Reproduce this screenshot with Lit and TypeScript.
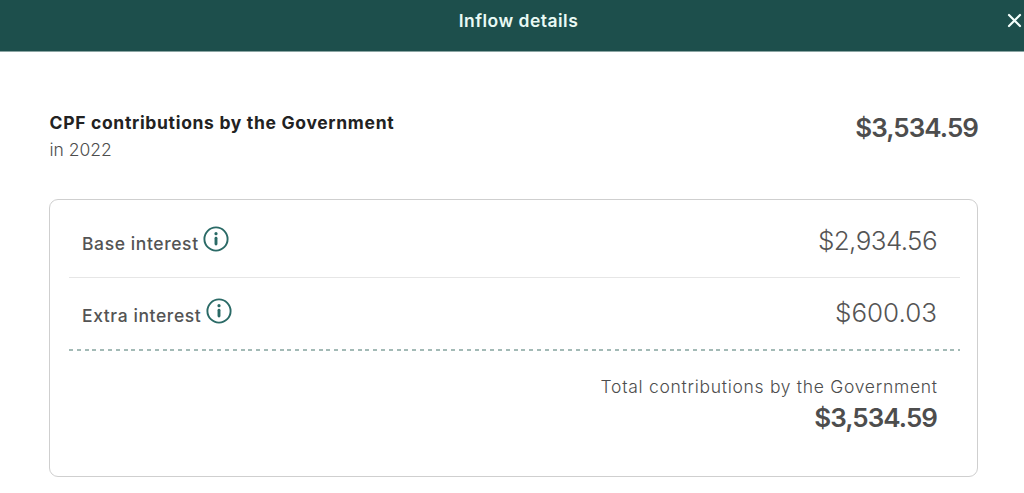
import { css, html, LitElement } from 'lit';
import { customElement, property } from 'lit/decorators.js';

type Inflow = {
    label: string,
    amount: string,
    kind: string
}

@customElement('info-icon')
export class InfoIcon extends LitElement {
    static styles = css`
        :host {
            display: block;
            width: 26px;
            height: 26px;
        }

        svg {
            display: block;
        }
    `;

    protected render() {
        return html`
            <svg width="26" height="26" viewBox="0 0 26 26" fill="none">
                <circle cx="13" cy="13" r="11.6" stroke="#2a6a66" stroke-width="1.9" />
                <circle cx="13" cy="7.7" r="1.6" fill="#2a6a66" />
                <path d="M13 12.3V18" stroke="#2a6a66" stroke-width="2.9" stroke-linecap="round" />
            </svg>
        `;
    }
}

@customElement('inflow-row')
export class InflowRow extends LitElement {
    static styles = css`
        :host {
            display: flex;
            justify-content: space-between;
            padding: 0 23px 0 13px;
            color: #545454;
        }

        .name {
            display: flex;
            gap: 4.5px;
        }

        .label {
            font-size: 17.5px;
            font-weight: 500;
            line-height: 24px;
            letter-spacing: 0.6px;
            padding-top: 32px;
        }

        .icon {
            padding-top: 26px;
        }

        .amount {
            font-size: 26px;
            font-weight: 300;
            line-height: 32px;
            padding-top: 25px;
        }

        .amount.base {
            letter-spacing: -0.6px;
        }
    `;

    @property({ type: String })
    public label: string = '';

    @property({ type: String })
    public amount: string = '';

    @property({ type: String })
    public kind: string = 'base';

    protected render() {
        return html`
            <div class="name">
                <span class="label">${this.label}</span>
                <info-icon class="icon"></info-icon>
            </div>
            <span class="amount ${this.kind}">${this.amount}</span>
        `;
    }
}

@customElement('app-root')
export class AppRoot extends LitElement {
    private _inflows: Inflow[] = [
        { label: 'Base interest', amount: '$2,934.56', kind: 'base' },
        { label: 'Extra interest', amount: '$600.03', kind: 'extra' }
    ];

    static styles = css`
        :host {
            display: block;
            height: 493px;
            overflow: hidden;
            background-color: #fff;
            color: #4d4d4d;
            font-family: Inter, "Liberation Sans", sans-serif;
        }

        header {
            display: grid;
            grid-template-columns: 1fr auto 1fr;
            height: 51px;
            border-bottom: 1px solid #8ba5a3;
            background-color: #1d4f4c;
        }

        .title {
            grid-column: 2;
            margin: 0;
            padding: 9px 0 0 13px;
            color: #e9faf5;
            font-size: 17.5px;
            font-weight: 600;
            line-height: 24px;
            letter-spacing: 0.48px;
        }

        .close {
            justify-self: end;
            padding: 13px 2.5px 0 0;
        }

        .close svg {
            display: block;
        }

        .summary {
            display: flex;
            justify-content: space-between;
            height: 147px;
            padding: 0 46px 0 49.5px;
            box-sizing: border-box;
        }

        .heading {
            margin: 0;
            padding-top: 59px;
            color: #222;
            font-size: 17.5px;
            font-weight: 700;
            line-height: 24px;
            letter-spacing: 0.68px;
        }

        .period {
            margin: 0;
            padding-top: 3px;
            font-size: 17.5px;
            font-weight: 300;
            line-height: 24px;
        }

        .sum {
            padding-top: 60px;
            font-size: 26px;
            font-weight: 600;
            line-height: 32px;
            letter-spacing: -0.95px;
        }

        .card {
            height: 278px;
            margin: 0 46px 0 49px;
            padding: 0 17px 0 19px;
            border: 1px solid #cfcfcf;
            border-radius: 9px;
            box-sizing: border-box;
        }

        inflow-row {
            height: 72px;
            box-sizing: border-box;
        }

        inflow-row.base {
            height: 78px;
            border-bottom: 1px solid #e6e6e6;
        }

        inflow-row.base + inflow-row {
            margin-top: -6px;
            height: 77px;
        }

        .dashes {
            height: 2px;
            background: repeating-linear-gradient(to right, #a3bab6 0 4px, #fff 4px 7.8px);
        }

        .total {
            padding-right: 23px;
            text-align: right;
        }

        .total-label {
            padding-top: 24px;
            margin-right: -0.7px;
            font-size: 17.5px;
            font-weight: 300;
            line-height: 24px;
            letter-spacing: 0.71px;
        }

        .total-amount {
            padding-top: 3px;
            font-size: 26px;
            font-weight: 600;
            line-height: 32px;
            letter-spacing: -0.95px;
        }
    `;

    protected render() {
        return html`
            <header>
                <h1 class="title">Inflow details</h1>
                <div class="close">
                    <svg width="15" height="15" viewBox="0 0 15 15">
                        <path d="M2 2L13 13M13 2L2 13" stroke="#f4fffc" stroke-width="2.2" stroke-linecap="round" />
                    </svg>
                </div>
            </header>
            <section class="summary">
                <div>
                    <h2 class="heading">CPF contributions by the Government</h2>
                    <p class="period">in 2022</p>
                </div>
                <div class="sum">$3,534.59</div>
            </section>
            <section class="card">
                ${this._inflows.map(item => html`
                    <inflow-row class=${item.kind} .label=${item.label} .amount=${item.amount} .kind=${item.kind}></inflow-row>
                `)}
                <div class="dashes"></div>
                <div class="total">
                    <div class="total-label">Total contributions by the Government</div>
                    <div class="total-amount">$3,534.59</div>
                </div>
            </section>
        `;
    }
}
